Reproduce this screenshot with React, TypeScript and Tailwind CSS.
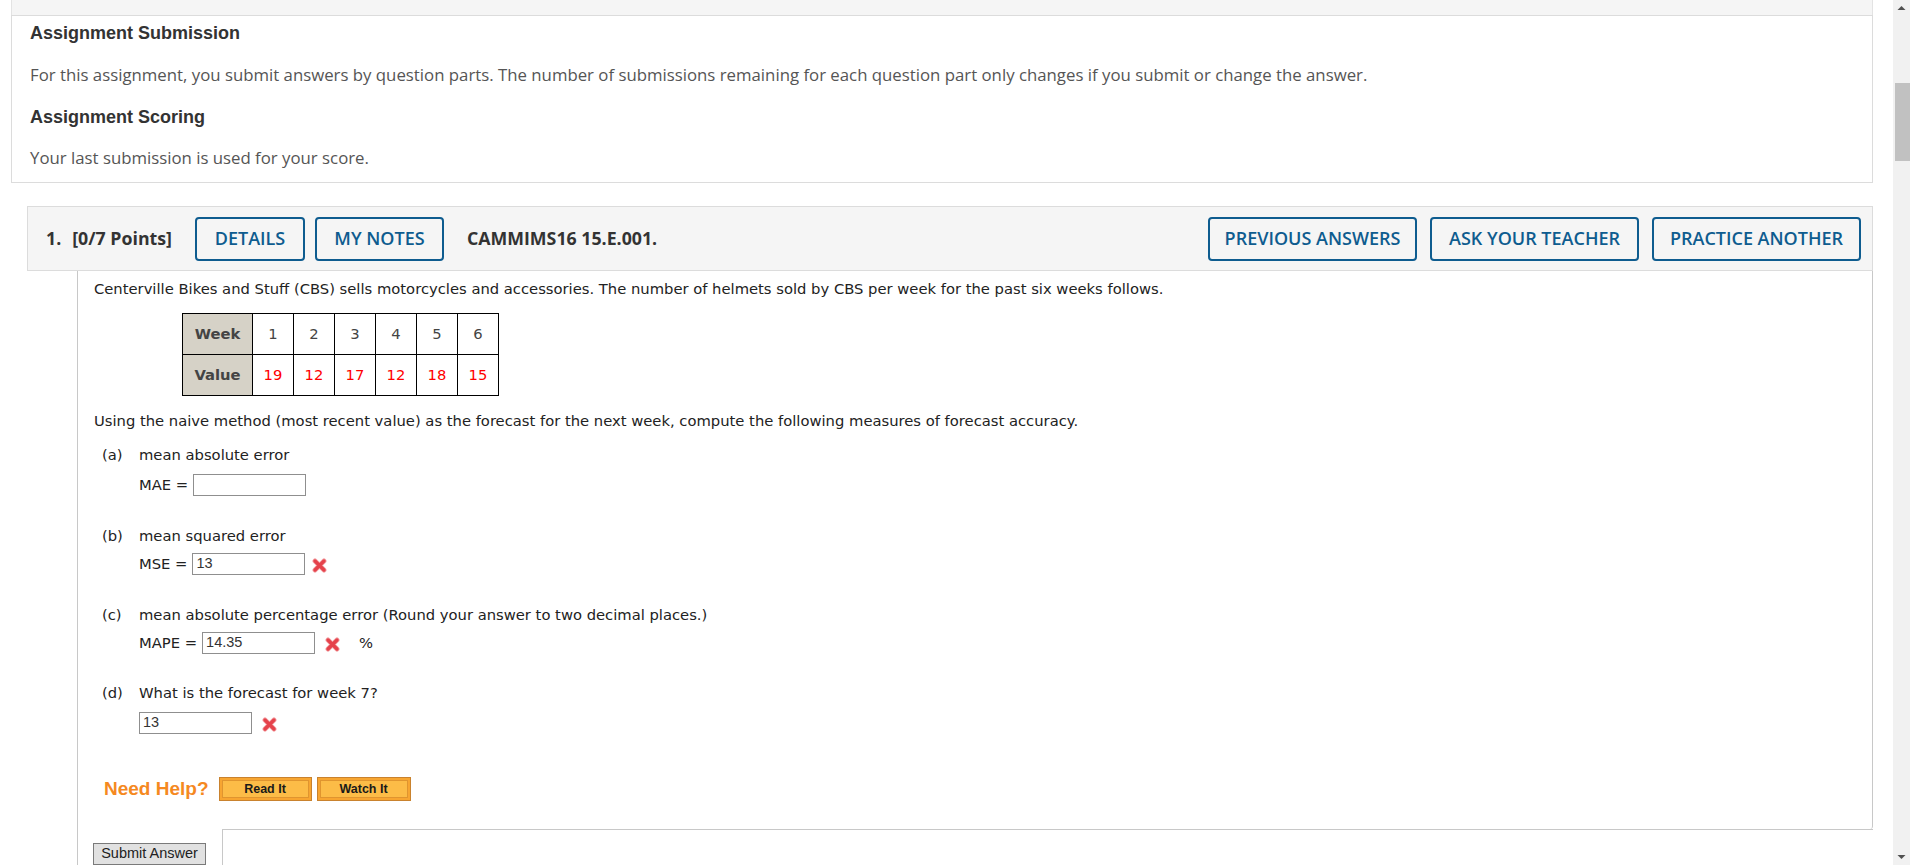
import React from "react";

const XMark = () => (
  <svg width="15" height="15" viewBox="0 0 15 15" className="shrink-0">
    <path d="M3 3 L12 12 M12 3 L3 12" stroke="#f3a6a9" strokeWidth="5" strokeLinecap="round" />
    <path d="M3 3 L12 12 M12 3 L3 12" stroke="#e5424b" strokeWidth="3.4" strokeLinecap="round" />
  </svg>
);

const Input = ({ value }: { value?: string }) => (
  <div className="w-[113px] h-[22px] border border-[#8f8f8f] bg-white pl-[3px] flex items-center font-['Liberation_Sans',Arial,sans-serif] text-[14.5px] text-[#333] shrink-0">
    {value}
  </div>
);

const BlueBtn = ({ label, w }: { label: string; w: string }) => (
  <div
    className={`${w} h-[44px] border-2 border-[#0e5c8f] rounded-[4px] flex items-center justify-center font-['Open_Sans',sans-serif] font-semibold text-[18px] text-[#0e5c8f] bg-[#f5f5f5] shrink-0`}
  >
    {label}
  </div>
);

const HelpBtn = ({ label, w }: { label: string; w: string }) => (
  <div className={`${w} h-[24px] border border-[#c9822e] bg-[#f7a531] p-[2px] shrink-0`}>
    <div className="w-full h-full border border-[#e0952f] bg-[#fcbc47] flex items-center justify-center font-['Liberation_Sans',Arial,sans-serif] font-bold text-[12.5px] text-[#1a1a1a]">
      {label}
    </div>
  </div>
);

export default function App() {
  const weeks = ["1", "2", "3", "4", "5", "6"];
  const values = ["19", "12", "17", "12", "18", "15"];
  return (
    <div className="h-[865px] w-[1910px] overflow-hidden flex bg-white">
      <div className="flex-1 flex flex-col min-w-0 overflow-hidden">
        {/* top strip */}
        <div className="shrink-0 ml-[11px] mr-[20px] h-[15px] bg-[#f5f5f5] border-x border-[#e3e3e3]" />
        {/* assignment info box */}
        <div className="shrink-0 ml-[11px] mr-[20px] h-[168px] border border-[#dcdcdc] px-[18px] flex flex-col">
          <div className="shrink-0 mt-[7px] h-[20px] leading-[20px] font-['Liberation_Sans',Arial,sans-serif] font-bold text-[18px] text-[#333]">
            Assignment Submission
          </div>
          <div className="shrink-0 mt-[22px] h-[20px] leading-[20px] font-['Open_Sans',sans-serif] text-[16.8px] text-[#555]">
            For this assignment, you submit answers by question parts. The number of submissions remaining for each question part only changes if you submit or change the answer.
          </div>
          <div className="shrink-0 mt-[22px] h-[20px] leading-[20px] font-['Liberation_Sans',Arial,sans-serif] font-bold text-[18px] text-[#333]">
            Assignment Scoring
          </div>
          <div className="shrink-0 mt-[21px] h-[20px] leading-[20px] font-['Open_Sans',sans-serif] text-[16.8px] text-[#555]">
            Your last submission is used for your score.
          </div>
        </div>

        {/* question */}
        <div className="shrink-0 ml-[27px] mr-[20px] mt-[23px] flex flex-col">
          <div className="shrink-0 h-[65px] bg-[#f5f5f5] border border-[#dcdcdc] flex items-center pl-[18px] pr-[11px]">
            <span className="font-['Open_Sans',sans-serif] font-bold text-[17.75px] text-[#333]">1.</span>
            <span className="ml-[11px] font-['Open_Sans',sans-serif] font-bold text-[17.75px] text-[#333]">[0/7 Points]</span>
            <div className="ml-[23px] flex gap-[10px]">
              <BlueBtn label="DETAILS" w="w-[110px]" />
              <BlueBtn label="MY NOTES" w="w-[129px]" />
            </div>
            <span className="ml-[23px] font-['Open_Sans',sans-serif] font-bold text-[17.75px] text-[#333]">CAMMIMS16 15.E.001.</span>
            <div className="ml-auto flex gap-[13px]">
              <BlueBtn label="PREVIOUS ANSWERS" w="w-[209px]" />
              <BlueBtn label="ASK YOUR TEACHER" w="w-[209px]" />
              <BlueBtn label="PRACTICE ANOTHER" w="w-[209px]" />
            </div>
          </div>

          {/* content */}
          <div className="shrink-0 ml-[50px] border-l border-[#c8c8c8] flex flex-col">
            <div className="shrink-0 border-r border-[#c8c8c8] rounded-br-[3px] pl-[16px] pb-[28px] flex flex-col font-['DejaVu_Sans',Verdana,sans-serif] text-[14.75px] text-[#222]">
              <div className="shrink-0 mt-[9px] h-[18px] leading-[18px] whitespace-nowrap">
                Centerville Bikes and Stuff (CBS) sells motorcycles and accessories. The number of helmets sold by CBS per week for the past six weeks follows.
              </div>
              <table className="shrink-0 mt-[15px] ml-[88px] border-collapse w-fit">
                <tbody>
                  <tr>
                    <td className="w-[70px] h-[41px] p-0 border border-black bg-[#d6d2c7] text-center font-bold text-[#444]">Week</td>
                    {weeks.map((w) => (
                      <td key={w} className="w-[41px] h-[41px] p-0 border border-black text-center text-[#444]">{w}</td>
                    ))}
                  </tr>
                  <tr>
                    <td className="w-[70px] h-[41px] p-0 border border-black bg-[#d6d2c7] text-center font-bold text-[#444]">Value</td>
                    {values.map((v, i) => (
                      <td key={i} className="w-[41px] h-[41px] p-0 border border-black text-center text-[#ff0000]">{v}</td>
                    ))}
                  </tr>
                </tbody>
              </table>
              <div className="shrink-0 mt-[16px] h-[18px] leading-[18px] whitespace-nowrap">
                Using the naive method (most recent value) as the forecast for the next week, compute the following measures of forecast accuracy.
              </div>

              {/* (a) */}
              <div className="shrink-0 mt-[16px] ml-[8px] h-[18px] leading-[18px] flex">
                <span className="w-[37px]">(a)</span>
                <span>mean absolute error</span>
              </div>
              <div className="shrink-0 mt-[10px] ml-[45px] h-[22px] flex items-center">
                <span>MAE =</span>
                <span className="ml-[5px]"><Input /></span>
              </div>

              {/* (b) */}
              <div className="shrink-0 mt-[31px] ml-[8px] h-[18px] leading-[18px] flex">
                <span className="w-[37px]">(b)</span>
                <span>mean squared error</span>
              </div>
              <div className="shrink-0 mt-[8px] ml-[45px] h-[22px] flex items-center">
                <span>MSE =</span>
                <span className="ml-[5px]"><Input value="13" /></span>
                <span className="ml-[7px] mt-[2px]"><XMark /></span>
              </div>

              {/* (c) */}
              <div className="shrink-0 mt-[31px] ml-[8px] h-[18px] leading-[18px] flex">
                <span className="w-[37px]">(c)</span>
                <span>mean absolute percentage error (Round your answer to two decimal places.)</span>
              </div>
              <div className="shrink-0 mt-[8px] ml-[45px] h-[22px] flex items-center">
                <span>MAPE =</span>
                <span className="ml-[5px]"><Input value="14.35" /></span>
                <span className="ml-[10px] mt-[2px]"><XMark /></span>
                <span className="ml-[19px]">%</span>
              </div>

              {/* (d) */}
              <div className="shrink-0 mt-[30px] ml-[8px] h-[18px] leading-[18px] flex">
                <span className="w-[37px]">(d)</span>
                <span>What is the forecast for week 7?</span>
              </div>
              <div className="shrink-0 mt-[10px] ml-[45px] h-[22px] flex items-center">
                <Input value="13" />
                <span className="ml-[10px] mt-[2px]"><XMark /></span>
              </div>

              {/* Need help */}
              <div className="shrink-0 mt-[43px] ml-[10px] h-[24px] flex items-center">
                <span className="font-['Liberation_Sans',Arial,sans-serif] font-bold text-[19px] text-[#f5891f]">Need Help?</span>
                <div className="ml-[10px] flex gap-[5px]">
                  <HelpBtn label="Read It" w="w-[93px]" />
                  <HelpBtn label="Watch It" w="w-[94px]" />
                </div>
              </div>
            </div>

            {/* bottom row */}
            <div className="shrink-0 flex">
              <div className="w-[144px] pl-[15px] pt-[14px]">
                <div className="w-[113px] h-[22px] border border-[#7a7a7a] bg-[#e1e1e1] flex items-center justify-center font-['Liberation_Sans',Arial,sans-serif] text-[14.5px] text-[#222]">
                  Submit Answer
                </div>
              </div>
              <div className="flex-1 border-t border-l border-[#c8c8c8] h-[40px]" />
            </div>
          </div>
        </div>
      </div>

      {/* scrollbar */}
      <div className="shrink-0 w-[17px] h-full bg-[#f1f1f1] flex flex-col items-center">
        <svg width="17" height="17" viewBox="0 0 17 17" className="shrink-0">
          <path d="M4.5 10 L8.5 6 L12.5 10 Z" fill="#505050" />
        </svg>
        <div className="shrink-0 mt-[66px] ml-[2px] w-[15px] h-[78px] bg-[#c1c1c1]" />
        <div className="flex-1" />
        <svg width="17" height="17" viewBox="0 0 17 17" className="shrink-0">
          <path d="M4.5 7 L8.5 11 L12.5 7 Z" fill="#505050" />
        </svg>
      </div>
    </div>
  );
}
